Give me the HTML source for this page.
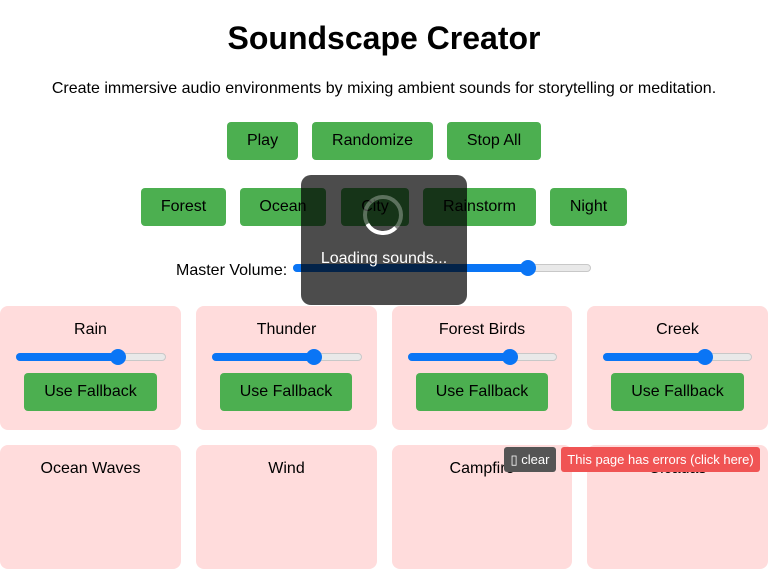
<!DOCTYPE html><html><head><style>
body{margin:0;width:768px;height:480px;overflow:hidden;background:#fff;font-family:"Liberation Sans",sans-serif;position:relative;color:#000}
.a{position:absolute}
.b{position:absolute;background:#4caf50;border-radius:4px;font-size:16px;display:flex;align-items:center;justify-content:center;height:38px}
.card{position:absolute;background:#ffdcdc;border-radius:8px;width:181px;height:124px}
.card .t{position:absolute;top:15px;width:100%;text-align:center;font-size:16px}
.sl{position:absolute;height:8px;border-radius:4px;background:#e9e9e9;border:1px solid #c8c8c8;box-sizing:border-box}
.sl i{position:absolute;left:-1px;top:-1px;height:8px;background:#0a75f5;border-radius:4px}
.sl b{position:absolute;width:16px;height:16px;border-radius:50%;background:#0a75f5;top:-5px}
</style></head><body>
<div class="a" style="top:20px;width:768px;text-align:center;font-size:32px;font-weight:bold">Soundscape Creator</div>
<div class="a" style="top:80px;width:768px;text-align:center;font-size:16px">Create immersive audio environments by mixing ambient sounds for storytelling or meditation.</div>
<div class="b" style="left:227px;top:122px;width:71px">Play</div>
<div class="b" style="left:312px;top:122px;width:121px">Randomize</div>
<div class="b" style="left:447px;top:122px;width:94px">Stop All</div>
<div class="b" style="left:141px;top:188px;width:85px">Forest</div>
<div class="b" style="left:240px;top:188px;width:86px">Ocean</div>
<div class="b" style="left:341px;top:188px;width:68px">City</div>
<div class="b" style="left:423px;top:188px;width:113px">Rainstorm</div>
<div class="b" style="left:550px;top:188px;width:77px">Night</div>
<div class="a" style="left:176px;top:262px;font-size:16px">Master Volume:</div>
<div class="sl" style="left:293px;top:264px;width:298px"><i style="width:234px"></i><b style="left:226px"></b></div>

<div class="card" style="left:0;top:306px"><div class="t">Rain</div><div class="sl" style="left:16px;top:47px;width:150px"><i style="width:102px"></i><b style="left:93px"></b></div><div class="b" style="left:24px;top:67px;width:133px">Use Fallback</div></div>
<div class="card" style="left:196px;top:306px"><div class="t">Thunder</div><div class="sl" style="left:16px;top:47px;width:150px"><i style="width:102px"></i><b style="left:93px"></b></div><div class="b" style="left:24px;top:67px;width:132px">Use Fallback</div></div>
<div class="card" style="left:392px;top:306px;width:180px"><div class="t">Forest Birds</div><div class="sl" style="left:16px;top:47px;width:149px"><i style="width:102px"></i><b style="left:93px"></b></div><div class="b" style="left:24px;top:67px;width:132px">Use Fallback</div></div>
<div class="card" style="left:587px;top:306px"><div class="t">Creek</div><div class="sl" style="left:16px;top:47px;width:149px"><i style="width:102px"></i><b style="left:93px"></b></div><div class="b" style="left:24px;top:67px;width:133px">Use Fallback</div></div>
<div class="card" style="left:0;top:445px"><div class="t">Ocean Waves</div></div>
<div class="card" style="left:196px;top:445px"><div class="t">Wind</div></div>
<div class="card" style="left:392px;top:445px;width:180px"><div class="t">Campfire</div></div>
<div class="card" style="left:587px;top:445px"><div class="t">Cicadas</div></div>

<div class="a" style="left:301px;top:175px;width:166px;height:130px;background:rgba(0,0,0,0.7);border-radius:10px">
<svg class="a" style="left:62px;top:20px" width="40" height="40"><circle cx="20" cy="20" r="18" fill="none" stroke="rgba(255,255,255,0.3)" stroke-width="4"/><path d="M4.4 29A18 18 0 0 0 32.7 32.7" fill="none" stroke="#fff" stroke-width="4"/></svg>
<div class="a" style="top:75px;width:166px;text-align:center;color:#fff;font-size:16px">Loading sounds...</div>
</div>
<div class="a" style="left:504px;top:447px;width:52px;height:25px;background:#555;border-radius:3px;color:#fff;font-size:13px;line-height:25px;text-align:center">▯ clear</div>
<div class="a" style="left:561px;top:447px;width:199px;height:25px;background:#f05454;border-radius:3px;color:#fff;font-size:13px;line-height:25px;text-align:center">This page has errors (click here)</div>
</body></html>
